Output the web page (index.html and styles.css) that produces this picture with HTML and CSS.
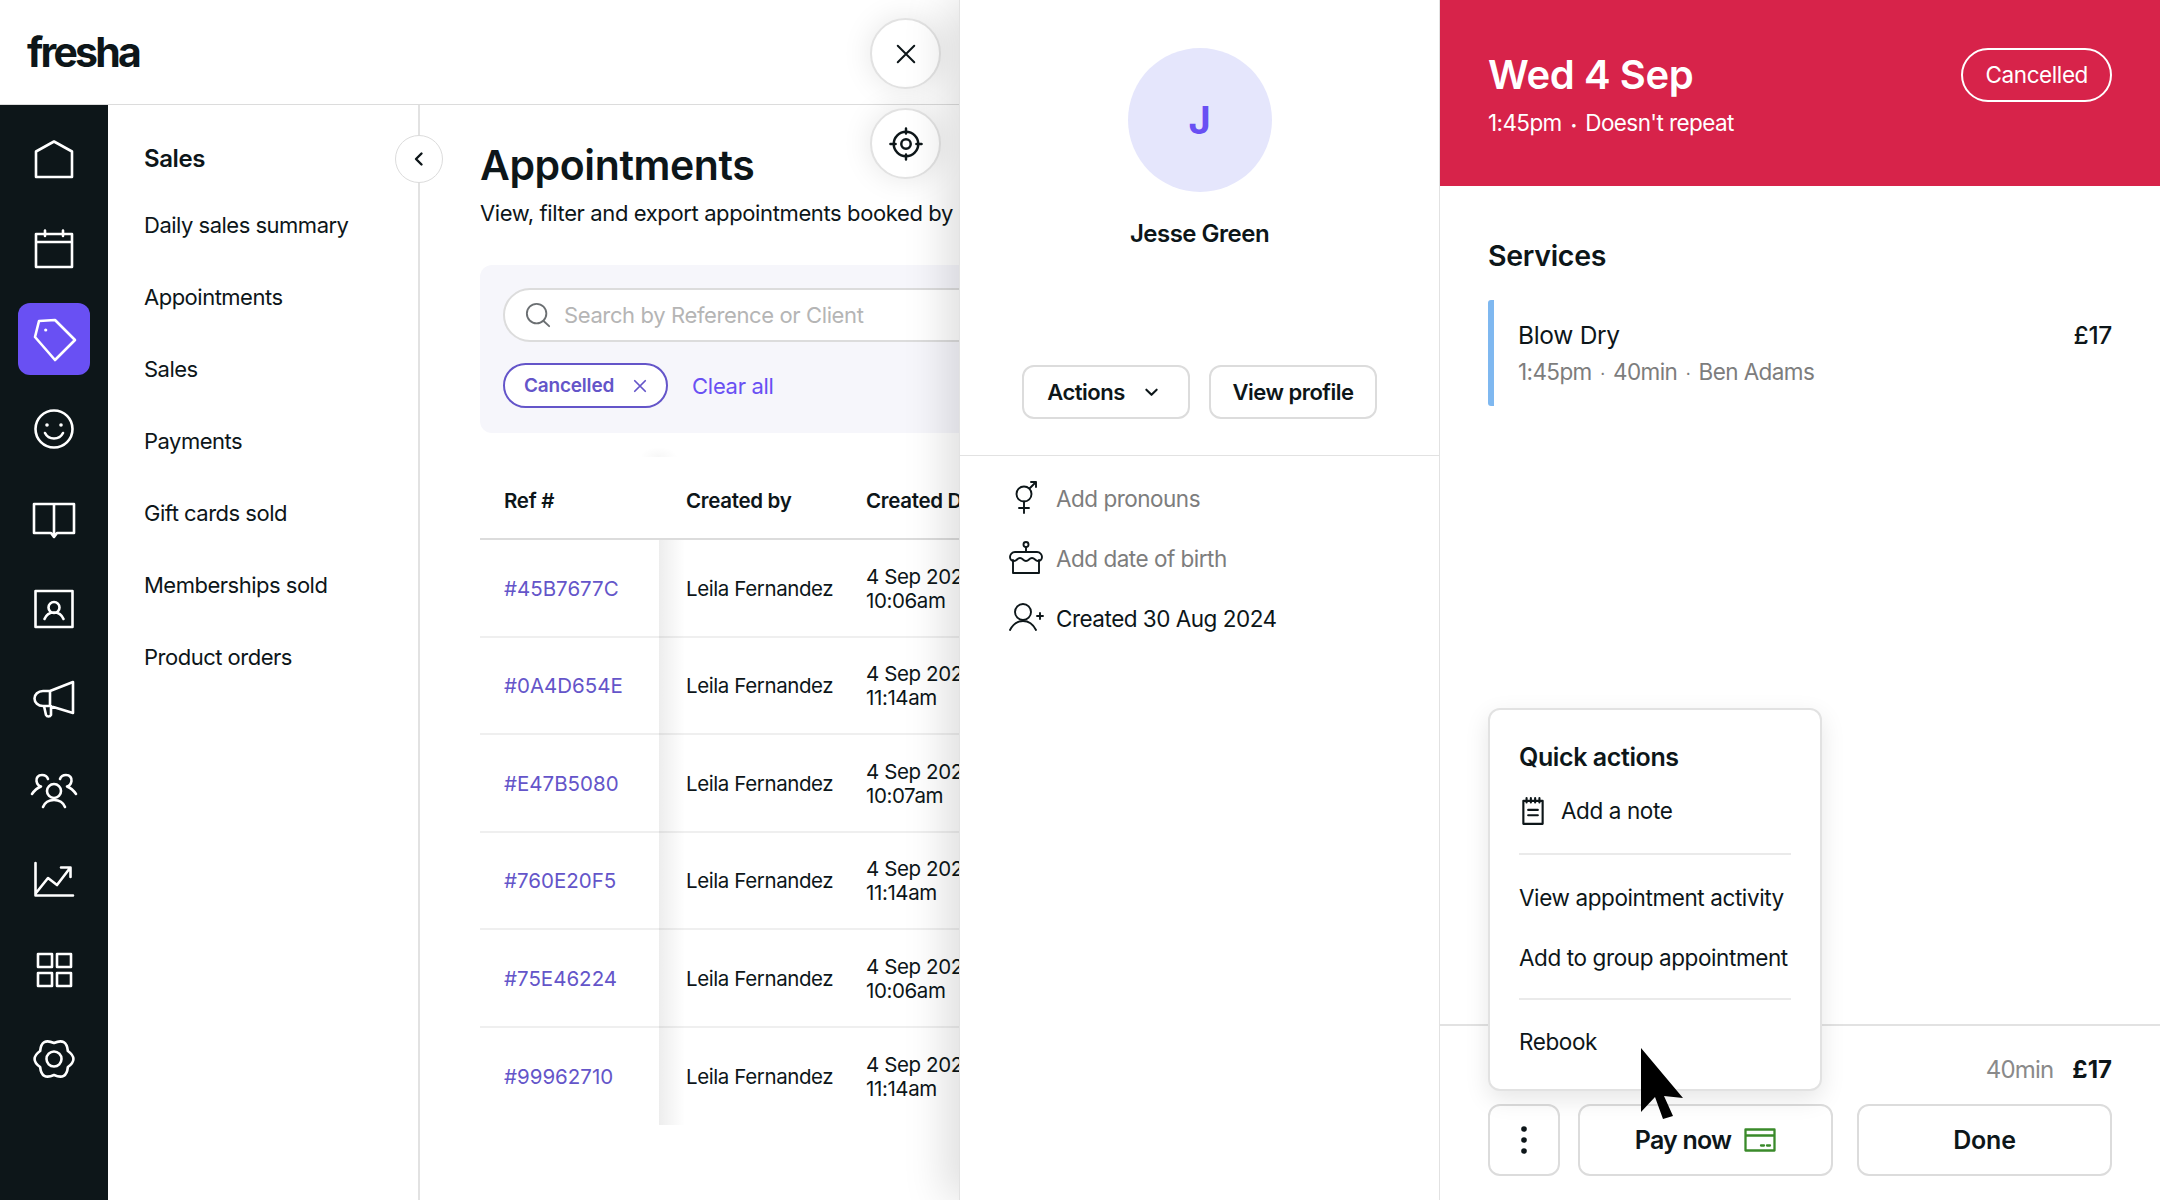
FILE: index.html
```html
<!DOCTYPE html>
<html lang="en">
<head>
    <meta charset="UTF-8">
    <title>Fresha - Appointments</title>
    <link rel="stylesheet" href="styles.css">
</head>
<body>
    <div class="app">
        <div class="backdrop">
            <header class="topbar"><span class="logo">fresha</span></header>
            <div class="workspace">
                <nav class="rail">
                    <a class="rail-item"><svg class="rail-icon" viewBox="0 0 44 44"><path d="M4 40V14.5L22 4.5 40 14.5V40Z"/></svg></a>
                    <a class="rail-item"><svg class="rail-icon" viewBox="0 0 44 44"><path d="M4 7H40V40H4ZM4 15H40M13 3.5V9M31 3.5V9"/></svg></a>
                    <a class="rail-item active"><svg class="rail-icon" viewBox="0 0 44 44"><path d="M3 20L7 4 23 3 43 23 23 43Z"/><circle class="dot" cx="13.7" cy="13" r="1.6"/></svg></a>
                    <a class="rail-item"><svg class="rail-icon" viewBox="0 0 44 44"><circle cx="22" cy="22" r="18.5"/><circle class="dot" cx="15" cy="18" r="1.8"/><circle class="dot" cx="29" cy="18" r="1.8"/><path d="M13 26c2 4 5 5.5 9 5.5s7-1.5 9-5.5"/></svg></a>
                    <a class="rail-item"><svg class="rail-icon" viewBox="0 0 44 44"><path d="M2 7H42V36H25L22 40 19 36H2ZM22 7V38"/></svg></a>
                    <a class="rail-item"><svg class="rail-icon" viewBox="0 0 44 44"><path d="M3.5 4H40.5V40H3.5Z"/><circle cx="22" cy="20.5" r="5.5"/><path d="M12.5 32c2-5 5-6.5 9.5-6.5s7.5 1.5 9.5 6.5"/></svg></a>
                    <a class="rail-item"><svg class="rail-icon" viewBox="0 0 44 44"><path d="M41 5V36L18 29H11C6 29 2.5 25.5 2.5 21.5S6 14 11 14H18ZM18 14V29M12 29l2 9c1 2 4 2 5 0v-9"/></svg></a>
                    <a class="rail-item"><svg class="rail-icon" viewBox="0 0 44 44"><circle cx="22" cy="24" r="7"/><path d="M11 40c2-5 6-7 11-7s9 2 11 7M16 12C15 9 13 8 10 8 6 8 4 11 4.5 14 5 17 7 19 9 19.5 5 21 2 24 0 27M28 12C29 9 31 8 34 8 38 8 40 11 39.5 14 39 17 37 19 35 19.5 39 21 42 24 44 27"/></svg></a>
                    <a class="rail-item"><svg class="rail-icon" viewBox="0 0 44 44"><path d="M3.5 6V38.5H41M4 36L16 21 25 28 38 11M29 10.5H38.5V20"/></svg></a>
                    <a class="rail-item"><svg class="rail-icon" viewBox="0 0 44 44"><path d="M6 7H20V20H6ZM25 7H39V20H25ZM6 26H20V39H6ZM25 26H39V39H25Z"/></svg></a>
                    <a class="rail-item"><svg class="rail-icon" viewBox="0 0 44 44"><path d="M22 6Q34.5 .35 35.86 14 47 22 35.86 30 34.5 43.65 22 38 9.5 43.65 8.14 30-3 22 8.14 14 9.5 .35 22 6Z"/><circle cx="22" cy="22" r="7.5"/></svg></a>
                </nav>
                <aside class="subnav">
                    <h2 class="subnav-title">Sales</h2>
                    <a class="subnav-link">Daily sales summary</a>
                    <a class="subnav-link">Appointments</a>
                    <a class="subnav-link">Sales</a>
                    <a class="subnav-link">Payments</a>
                    <a class="subnav-link">Gift cards sold</a>
                    <a class="subnav-link">Memberships sold</a>
                    <a class="subnav-link">Product orders</a>
                    <button class="collapse-btn"><svg viewBox="0 0 20 20"><path d="M12.5 4.5L7 10l5.5 5.5"/></svg></button>
                </aside>
                <main class="content">
                    <h1 class="page-title">Appointments</h1>
                    <p class="page-desc">View, filter and export appointments booked by your clients and team members</p>
                    <section class="filters">
                        <div class="search">
                            <svg class="search-icon" viewBox="0 0 28 28"><circle cx="12.5" cy="12.5" r="10.5"/><path d="M20 20.5L26 26"/></svg>
                            <span class="search-text">Search by Reference or Client</span>
                        </div>
                        <div class="filter-row">
                            <span class="chip">Cancelled<svg class="chip-x" viewBox="0 0 16 16"><path d="M2 2L14 14M14 2L2 14"/></svg></span>
                            <a class="clear-all">Clear all</a>
                        </div>
                    </section>
                    <div class="table">
                        <div class="row head">
                            <div>Ref #</div><div>Created by</div><div>Created Date</div>
                        </div>
                        <div class="rows">
                            <div class="row"><a class="ref">#45B7677C</a><div>Leila Fernandez</div><div>4 Sep 2024<br>10:06am</div></div>
                            <div class="row"><a class="ref">#0A4D654E</a><div>Leila Fernandez</div><div>4 Sep 2024<br>11:14am</div></div>
                            <div class="row"><a class="ref">#E47B5080</a><div>Leila Fernandez</div><div>4 Sep 2024<br>10:07am</div></div>
                            <div class="row"><a class="ref">#760E20F5</a><div>Leila Fernandez</div><div>4 Sep 2024<br>11:14am</div></div>
                            <div class="row"><a class="ref">#75E46224</a><div>Leila Fernandez</div><div>4 Sep 2024<br>10:06am</div></div>
                            <div class="row"><a class="ref">#99962710</a><div>Leila Fernandez</div><div>4 Sep 2024<br>11:14am</div></div>
                        </div>
                    </div>
                </main>
            </div>
            <button class="float-btn close-btn"><svg viewBox="0 0 24 24"><path d="M3 3L21 21M21 3L3 21"/></svg></button>
            <button class="float-btn target-btn"><svg viewBox="0 0 36 36"><circle cx="18" cy="18" r="13"/><circle cx="18" cy="18" r="5"/><path d="M18 1.5V7M18 29V34.5M1.5 18H7M29 18H34.5"/></svg></button>
        </div>

        <section class="client-panel">
            <div class="client-head">
                <div class="avatar">J</div>
                <div class="client-name">Jesse Green</div>
                <div class="client-actions">
                    <button class="btn actions-btn">Actions<svg class="chevron" viewBox="0 0 16 16"><path d="M2.5 5L8 10.5 13.5 5"/></svg></button>
                    <button class="btn profile-btn">View profile</button>
                </div>
            </div>
            <ul class="client-info">
                <li class="muted"><svg class="info-icon" viewBox="0 0 36 36"><circle cx="16" cy="14" r="7.5"/><path d="M16 21.5V33M11 28H21M21.5 8.5L28 2M23 2H28V7"/></svg>Add pronouns</li>
                <li class="muted"><svg class="info-icon" viewBox="0 0 36 36"><circle cx="18" cy="4.5" r="2.5"/><path d="M18 7V12M7 12H29C32 12 34 14.5 34 17 34 19.5 32 21 30 21 27 21 27 18 24 18S21 21 18 21 15 18 12 18 9 21 6 21C4 21 2 19.5 2 17 2 14.5 4 12 7 12ZM5 20V33H31V20"/></svg>Add date of birth</li>
                <li><svg class="info-icon" viewBox="0 0 36 36"><circle cx="15" cy="12" r="8"/><path d="M2 30C5 24 9 21 15 21S25 24 28 30M29 16H35M32 13V19"/></svg>Created 30 Aug 2024</li>
            </ul>
        </section>

        <section class="appt-panel">
            <header class="appt-head">
                <div>
                    <div class="appt-date">Wed 4 Sep</div>
                    <div class="appt-time">1:45pm<span class="sep">•</span>Doesn't repeat</div>
                </div>
                <span class="status">Cancelled</span>
            </header>
            <div class="appt-body">
                <h3 class="services-title">Services</h3>
                <div class="service">
                    <div class="service-main">
                        <div class="service-name">Blow Dry</div>
                        <div class="service-meta">1:45pm<span class="sep">•</span>40min<span class="sep">•</span>Ben Adams</div>
                    </div>
                    <div class="service-price">£17</div>
                </div>
            </div>
            <footer class="appt-foot">
                <div class="totals"><span class="total-time">40min</span><span class="total-price">£17</span></div>
                <div class="foot-btns">
                    <button class="btn more-btn"><svg viewBox="0 0 8 32"><circle cx="4" cy="5" r="2.8"/><circle cx="4" cy="16" r="2.8"/><circle cx="4" cy="27" r="2.8"/></svg></button>
                    <button class="btn pay-btn">Pay now<svg class="card-icon" viewBox="0 0 32 24"><path d="M1.5 1.5H30.5V22.5H1.5ZM1.5 7.5H30.5M17 17.5H20M23 17.5H26"/></svg></button>
                    <button class="btn done-btn">Done</button>
                </div>
            </footer>
            <div class="quick-menu">
                <div class="menu-title">Quick actions</div>
                <div class="menu-note"><svg class="note-icon" viewBox="0 0 24 28"><path d="M3 4.5H21V26H3ZM6 2V6M10 2V6M14 2V6M18 2V6M7.5 13H16.5M7.5 18H16.5"/></svg>Add a note</div>
                <hr class="menu-line">
                <div class="menu-item first">View appointment activity</div>
                <div class="menu-item">Add to group appointment</div>
                <hr class="menu-line second">
                <div class="menu-item rebook">Rebook</div>
            </div>
            <svg class="cursor" viewBox="0 0 44 72"><path d="M1 0L43 50 24 48 33 68 23 71 15 49 1 64Z"/></svg>
        </section>
    </div>
</body>
</html>
```

FILE: styles.css
```css
* {
    box-sizing: border-box;
}
body {
    margin: 0;
    font-family: Inter, "Liberation Sans", sans-serif;
    color: #0d1619;
    background-color: white;
    overflow: hidden;
}
button {
    font-family: inherit;
    color: inherit;
    background-color: white;
    cursor: pointer;
}
svg {
    fill: none;
    stroke: currentColor;
    stroke-width: 2;
    stroke-linecap: round;
    stroke-linejoin: round;
}
.app {
    display: flex;
    width: 2160px;
    height: 1200px;
}

/* page behind the panels */
.backdrop {
    position: relative;
    width: 959px;
    display: flex;
    flex-direction: column;
    flex-shrink: 0;
}
.topbar {
    height: 105px;
    padding: 27px 0 0 27px;
    border-bottom: 1px solid #dcdcdc;
}
.logo {
    font-size: 41px;
    font-weight: 700;
    letter-spacing: -2.8px;
    line-height: 1.25;
}
.workspace {
    flex: 1;
    display: flex;
    min-height: 0;
}
.rail {
    width: 108px;
    flex-shrink: 0;
    padding-top: 17.5px;
    display: flex;
    flex-direction: column;
    align-items: center;
    gap: 18px;
    background-color: #0d1619;
    color: white;
}
.rail-item {
    width: 72px;
    height: 72px;
    flex-shrink: 0;
    display: flex;
    align-items: center;
    justify-content: center;
    border-radius: 12px;
}
.rail-item.active {
    background-color: #6950f3;
}
.rail-icon {
    width: 44px;
    height: 44px;
    stroke-width: 2.6;
    overflow: visible;
}
.dot {
    fill: currentColor;
    stroke: none;
}
.subnav {
    position: relative;
    width: 312px;
    flex-shrink: 0;
    padding: 37px 0 0 36px;
    border-right: 2px solid #e2e2e2;
}
.subnav-title {
    margin: 0 0 32px;
    height: 34px;
    font-size: 24px;
    font-weight: 600;
    line-height: 34px;
    letter-spacing: -0.4px;
}
.subnav-link {
    display: block;
    height: 34px;
    margin-bottom: 38px;
    font-size: 22px;
    line-height: 34px;
    letter-spacing: -0.5px;
    white-space: nowrap;
}
.collapse-btn {
    position: absolute;
    top: 30px;
    right: -25px;
    width: 48px;
    height: 48px;
    padding: 13px;
    border: 1px solid #dcdcdc;
    border-radius: 50%;
    z-index: 1;
}
.collapse-btn svg {
    display: block;
    stroke-width: 2.4;
}
.content {
    flex: 1;
    min-width: 0;
    padding: 35px 0 0 60px;
    overflow: hidden;
}
.page-title {
    margin: 0;
    font-size: 41px;
    font-weight: 600;
    line-height: 50px;
    letter-spacing: -0.4px;
}
.page-desc {
    margin: 7px 0 0;
    font-size: 22px;
    line-height: 32px;
    letter-spacing: -0.38px;
    white-space: nowrap;
}
.filters {
    width: 700px;
    height: 168px;
    margin-top: 36px;
    padding: 24px 23px;
    background-color: #f6f6fb;
    border-radius: 12px;
}
.search {
    height: 54px;
    margin-top: -1px;
    display: flex;
    align-items: center;
    gap: 13px;
    padding-left: 20px;
    background-color: white;
    border: 2px solid #dcdcdc;
    border-radius: 27px;
}
.search-icon {
    width: 26px;
    height: 26px;
    color: #6b6f72;
}
.search-text {
    font-size: 22px;
    letter-spacing: -0.38px;
    color: #b5b5b5;
}
.filter-row {
    display: flex;
    align-items: center;
    gap: 24px;
    margin-top: 21px;
}
.chip {
    height: 45px;
    display: flex;
    align-items: center;
    gap: 19px;
    padding: 0 19px;
    font-size: 19px;
    font-weight: 600;
    letter-spacing: -0.2px;
    color: #6455c9;
    background-color: white;
    border: 2px solid #6455c9;
    border-radius: 23px;
}
.chip-x {
    width: 14px;
    height: 14px;
}
.clear-all {
    font-size: 22px;
    letter-spacing: -0.3px;
    color: #6950f3;
}
.table {
    position: relative;
    width: 700px;
    margin-top: 24px;
}
.table::before {
    content: "";
    position: absolute;
    top: -10px;
    left: 160px;
    width: 38px;
    height: 10px;
    background: radial-gradient(ellipse at bottom, rgba(0,0,0,0.03), rgba(0,0,0,0) 70%);
}
.rows {
    position: relative;
}
.rows::after {
    content: "";
    position: absolute;
    top: 0;
    bottom: 0;
    left: 179px;
    width: 26px;
    background: linear-gradient(to right, rgba(0,0,0,0.07), rgba(0,0,0,0));
}
.row {
    display: grid;
    grid-template-columns: 182px 180px 1fr;
    align-items: center;
    height: 97.5px;
    padding: 2px 0 0 24px;
    font-size: 20.5px;
    line-height: 24px;
    letter-spacing: -0.4px;
    white-space: nowrap;
    border-bottom: 2px solid #efefef;
}
.row:last-child {
    border-bottom: none;
}
.row.head {
    height: 83px;
    padding-top: 6px;
    font-weight: 600;
    letter-spacing: -0.3px;
    border-bottom: 2px solid #dcdcdc;
}
.ref {
    color: #6455c9;
    letter-spacing: 0;
}

/* client panel */
.client-panel {
    width: 480px;
    flex-shrink: 0;
    background-color: white;
    border-left: 1px solid #e2e2e2;
    box-shadow: -14px 0 40px rgba(0,0,0,0.13);
    z-index: 2;
}
.client-head {
    height: 456px;
    padding-top: 48px;
    display: flex;
    flex-direction: column;
    align-items: center;
    border-bottom: 1px solid #e2e2e2;
}
.avatar {
    width: 144px;
    height: 144px;
    display: flex;
    align-items: center;
    justify-content: center;
    font-size: 38px;
    font-weight: 700;
    color: #6950f3;
    background-color: #e5e6fc;
    border-radius: 50%;
}
.client-name {
    margin-top: 25px;
    font-size: 24px;
    font-weight: 600;
    line-height: 34px;
    letter-spacing: -0.5px;
}
.client-actions {
    display: flex;
    gap: 19px;
    margin-top: 114px;
}
.btn {
    display: flex;
    align-items: center;
    justify-content: center;
    border: 2px solid #dcdcdc;
    border-radius: 12px;
    font-weight: 600;
}
.actions-btn, .profile-btn {
    width: 168px;
    height: 54px;
    font-size: 22px;
    letter-spacing: -0.5px;
}
.actions-btn {
    gap: 19px;
    padding: 0 6px 0 0;
}
.chevron {
    width: 15px;
    height: 15px;
    stroke-width: 2.2;
}
.client-info {
    margin: 12px 0 0;
    padding: 0 0 0 48px;
    list-style: none;
}
.client-info li {
    height: 60px;
    display: flex;
    align-items: center;
    font-size: 22.5px;
    letter-spacing: -0.5px;
    white-space: nowrap;
}
.client-info .muted {
    color: #7d7d7d;
}
.info-icon {
    width: 36px;
    height: 36px;
    margin-right: 12px;
    color: #0d1619;
    stroke-width: 1.9;
}

/* appointment panel */
.appt-panel {
    position: relative;
    width: 721px;
    flex-shrink: 0;
    display: flex;
    flex-direction: column;
    background-color: white;
    border-left: 1px solid #e2e2e2;
    z-index: 3;
}
.appt-head {
    height: 186px;
    padding: 49px 48px 0;
    display: flex;
    justify-content: space-between;
    align-items: flex-start;
    color: white;
    background-color: #d7234a;
}
.appt-date {
    font-size: 40px;
    font-weight: 600;
    line-height: 52px;
    letter-spacing: -0.4px;
}
.appt-time {
    margin-top: 7px;
    font-size: 22.5px;
    line-height: 30px;
    letter-spacing: -0.6px;
}
.sep {
    margin: 0 9px;
    font-size: 11px;
    vertical-align: 2px;
}
.status {
    height: 54px;
    margin-top: -1px;
    padding: 0 22px;
    font-size: 22.5px;
    line-height: 50px;
    letter-spacing: -0.4px;
    border: 2px solid white;
    border-radius: 27px;
}
.appt-body {
    flex: 1;
    padding: 51px 48px 0;
}
.services-title {
    margin: 0;
    font-size: 28.5px;
    font-weight: 600;
    line-height: 38px;
    letter-spacing: -0.3px;
}
.service {
    display: flex;
    justify-content: space-between;
    height: 106px;
    margin-top: 25px;
    padding: 17px 0 0 24px;
    border-left: 6px solid #7fb8f0;
    border-radius: 3px;
}
.service-name, .service-price {
    font-size: 24.5px;
    line-height: 36px;
    letter-spacing: -0.3px;
}
.service-price {
    font-weight: 500;
}
.service-meta {
    margin-top: 2px;
    font-size: 22.5px;
    line-height: 34px;
    letter-spacing: -0.6px;
    color: #7d7d7d;
}
.service-meta .sep {
    font-size: 7px;
    vertical-align: 4px;
}
.appt-foot {
    height: 176px;
    padding: 24px 48px 0;
    border-top: 2px solid #e2e2e2;
}
.totals {
    display: flex;
    justify-content: flex-end;
    align-items: center;
    gap: 19px;
    height: 38px;
    font-size: 24px;
}
.total-time {
    letter-spacing: -0.8px;
    color: #8a8a8a;
}
.total-price {
    font-weight: 700;
}
.foot-btns {
    display: flex;
    margin-top: 16px;
}
.foot-btns .btn {
    height: 72px;
    font-size: 25px;
}
.more-btn {
    width: 72px;
}
.more-btn svg {
    width: 8px;
    height: 32px;
    fill: #0d1619;
    stroke: none;
}
.pay-btn {
    width: 255px;
    margin-left: 18px;
    gap: 13px;
    letter-spacing: -0.8px;
}
.foot-btns .done-btn {
    width: 255px;
    margin-left: 24px;
    letter-spacing: -0.2px;
}
.card-icon {
    width: 32px;
    height: 24px;
    color: #3a8a2a;
    stroke-width: 2.3;
}
.quick-menu {
    position: absolute;
    top: 708px;
    left: 48px;
    width: 334px;
    height: 383px;
    padding: 28px 29px 0;
    background-color: white;
    border: 2px solid #e2e2e2;
    border-radius: 12px;
    box-shadow: 0 8px 24px rgba(0,0,0,0.1);
}
.menu-title {
    font-size: 25px;
    font-weight: 600;
    line-height: 38px;
    letter-spacing: -0.4px;
}
.menu-note {
    display: flex;
    align-items: center;
    gap: 15px;
    margin-top: 17px;
    font-size: 22.5px;
    line-height: 36px;
    letter-spacing: -0.4px;
}
.note-icon {
    width: 26px;
    height: 30px;
    margin-left: 1px;
}
.menu-line {
    margin: 24px 0 0;
    border: none;
    border-top: 2px solid #eaeaea;
}
.menu-line.second {
    margin-top: 22px;
}
.menu-item {
    font-size: 22.5px;
    line-height: 36px;
    letter-spacing: -0.4px;
    white-space: nowrap;
}
.menu-item.first {
    margin-top: 25px;
}
.menu-item + .menu-item {
    margin-top: 24px;
}
.menu-item.rebook {
    margin-top: 24px;
}
.cursor {
    position: absolute;
    top: 1048px;
    left: 200px;
    width: 44px;
    height: 72px;
    fill: black;
    stroke: none;
}

/* round buttons floating over the page */
.float-btn {
    position: absolute;
    left: 870px;
    width: 71px;
    height: 71px;
    padding: 0;
    display: flex;
    align-items: center;
    justify-content: center;
    border: 2px solid #e2e2e2;
    border-radius: 50%;
    box-shadow: 0 0 30px rgba(0,0,0,0.1);
}
.close-btn {
    top: 18px;
}
.target-btn {
    top: 108px;
}
.close-btn svg {
    width: 22px;
    height: 22px;
    stroke-width: 2.2;
}
.target-btn svg {
    width: 34px;
    height: 34px;
    stroke-width: 2.6;
}
```
